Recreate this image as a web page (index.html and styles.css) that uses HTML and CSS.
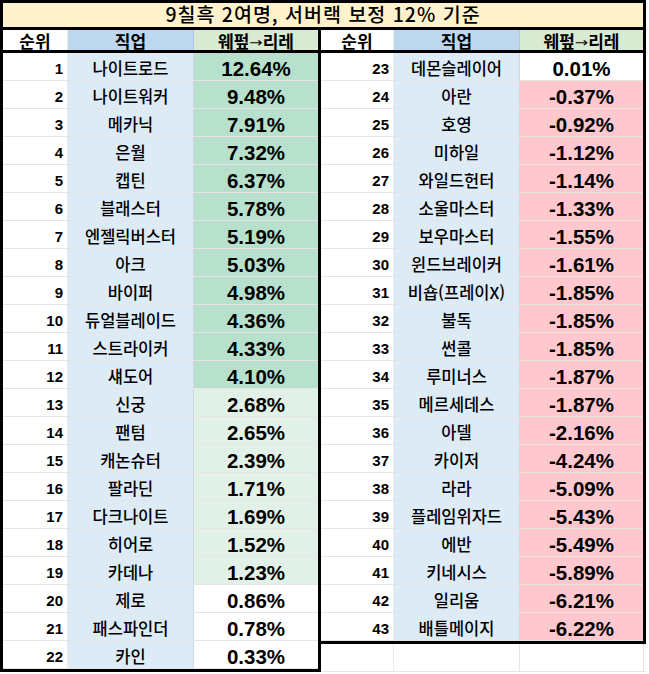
FILE: index.html
```html
<!DOCTYPE html>
<html lang="ko">
<head>
<meta charset="utf-8">
<title>9칠흑 2여명, 서버랙 보정 12% 기준</title>
<link rel="stylesheet" href="styles.css">
</head>
<body>
<div class="sheet">
  <div class="title">9칠흑 2여명, 서버랙 보정 12% 기준</div>
  <div class="head">
    <div class="half left">
      <div class="hc rank-l">순위</div>
      <div class="hc job hb">직업</div>
      <div class="hc val-l hg">웨펖<span class="arrow">→</span>리레</div>
    </div>
    <div class="half right">
      <div class="hc rank-r">순위</div>
      <div class="hc job hb">직업</div>
      <div class="hc val-r hg">웨펖<span class="arrow">→</span>리레</div>
    </div>
  </div>
  <div class="body">
    <div class="block left">
      <div class="row"><div class="c rank rank-l">1</div><div class="c job">나이트로드</div><div class="c val val-l g">12.64%</div></div>
      <div class="row"><div class="c rank rank-l">2</div><div class="c job">나이트워커</div><div class="c val val-l g">9.48%</div></div>
      <div class="row"><div class="c rank rank-l">3</div><div class="c job">메카닉</div><div class="c val val-l g">7.91%</div></div>
      <div class="row"><div class="c rank rank-l">4</div><div class="c job">은월</div><div class="c val val-l g">7.32%</div></div>
      <div class="row"><div class="c rank rank-l">5</div><div class="c job">캡틴</div><div class="c val val-l g">6.37%</div></div>
      <div class="row"><div class="c rank rank-l">6</div><div class="c job">블래스터</div><div class="c val val-l g">5.78%</div></div>
      <div class="row"><div class="c rank rank-l">7</div><div class="c job">엔젤릭버스터</div><div class="c val val-l g">5.19%</div></div>
      <div class="row"><div class="c rank rank-l">8</div><div class="c job">아크</div><div class="c val val-l g">5.03%</div></div>
      <div class="row"><div class="c rank rank-l">9</div><div class="c job">바이퍼</div><div class="c val val-l g">4.98%</div></div>
      <div class="row"><div class="c rank rank-l">10</div><div class="c job">듀얼블레이드</div><div class="c val val-l g">4.36%</div></div>
      <div class="row"><div class="c rank rank-l">11</div><div class="c job">스트라이커</div><div class="c val val-l g">4.33%</div></div>
      <div class="row"><div class="c rank rank-l">12</div><div class="c job">섀도어</div><div class="c val val-l g">4.10%</div></div>
      <div class="row"><div class="c rank rank-l">13</div><div class="c job">신궁</div><div class="c val val-l lg">2.68%</div></div>
      <div class="row"><div class="c rank rank-l">14</div><div class="c job">팬텀</div><div class="c val val-l lg">2.65%</div></div>
      <div class="row"><div class="c rank rank-l">15</div><div class="c job">캐논슈터</div><div class="c val val-l lg">2.39%</div></div>
      <div class="row"><div class="c rank rank-l">16</div><div class="c job">팔라딘</div><div class="c val val-l lg">1.71%</div></div>
      <div class="row"><div class="c rank rank-l">17</div><div class="c job">다크나이트</div><div class="c val val-l lg">1.69%</div></div>
      <div class="row"><div class="c rank rank-l">18</div><div class="c job">히어로</div><div class="c val val-l lg">1.52%</div></div>
      <div class="row"><div class="c rank rank-l">19</div><div class="c job">카데나</div><div class="c val val-l lg">1.23%</div></div>
      <div class="row"><div class="c rank rank-l">20</div><div class="c job">제로</div><div class="c val val-l">0.86%</div></div>
      <div class="row"><div class="c rank rank-l">21</div><div class="c job">패스파인더</div><div class="c val val-l">0.78%</div></div>
      <div class="row"><div class="c rank rank-l">22</div><div class="c job">카인</div><div class="c val val-l">0.33%</div></div>
    </div>
    <div class="rcol">
      <div class="block right">
        <div class="row"><div class="c rank rank-r">23</div><div class="c job">데몬슬레이어</div><div class="c val val-r">0.01%</div></div>
        <div class="row"><div class="c rank rank-r">24</div><div class="c job">아란</div><div class="c val val-r p">-0.37%</div></div>
        <div class="row"><div class="c rank rank-r">25</div><div class="c job">호영</div><div class="c val val-r p">-0.92%</div></div>
        <div class="row"><div class="c rank rank-r">26</div><div class="c job">미하일</div><div class="c val val-r p">-1.12%</div></div>
        <div class="row"><div class="c rank rank-r">27</div><div class="c job">와일드헌터</div><div class="c val val-r p">-1.14%</div></div>
        <div class="row"><div class="c rank rank-r">28</div><div class="c job">소울마스터</div><div class="c val val-r p">-1.33%</div></div>
        <div class="row"><div class="c rank rank-r">29</div><div class="c job">보우마스터</div><div class="c val val-r p">-1.55%</div></div>
        <div class="row"><div class="c rank rank-r">30</div><div class="c job">윈드브레이커</div><div class="c val val-r p">-1.61%</div></div>
        <div class="row"><div class="c rank rank-r">31</div><div class="c job">비숍(프레이X)</div><div class="c val val-r p">-1.85%</div></div>
        <div class="row"><div class="c rank rank-r">32</div><div class="c job">불독</div><div class="c val val-r p">-1.85%</div></div>
        <div class="row"><div class="c rank rank-r">33</div><div class="c job">썬콜</div><div class="c val val-r p">-1.85%</div></div>
        <div class="row"><div class="c rank rank-r">34</div><div class="c job">루미너스</div><div class="c val val-r p">-1.87%</div></div>
        <div class="row"><div class="c rank rank-r">35</div><div class="c job">메르세데스</div><div class="c val val-r p">-1.87%</div></div>
        <div class="row"><div class="c rank rank-r">36</div><div class="c job">아델</div><div class="c val val-r p">-2.16%</div></div>
        <div class="row"><div class="c rank rank-r">37</div><div class="c job">카이저</div><div class="c val val-r p">-4.24%</div></div>
        <div class="row"><div class="c rank rank-r">38</div><div class="c job">라라</div><div class="c val val-r p">-5.09%</div></div>
        <div class="row"><div class="c rank rank-r">39</div><div class="c job">플레임위자드</div><div class="c val val-r p">-5.43%</div></div>
        <div class="row"><div class="c rank rank-r">40</div><div class="c job">에반</div><div class="c val val-r p">-5.49%</div></div>
        <div class="row"><div class="c rank rank-r">41</div><div class="c job">키네시스</div><div class="c val val-r p">-5.89%</div></div>
        <div class="row"><div class="c rank rank-r">42</div><div class="c job">일리움</div><div class="c val val-r p">-6.21%</div></div>
        <div class="row"><div class="c rank rank-r">43</div><div class="c job">배틀메이지</div><div class="c val val-r p">-6.22%</div></div>
      </div>
      <div class="row empty"><div class="c rank rank-r"></div><div class="c blank"></div><div class="c blank last"></div></div>
    </div>
  </div>
</div>
</body>
</html>
```

FILE: styles.css
```css
html, body {
  margin: 0;
  padding: 0;
  background: #ffffff;
}

.sheet {
  width: 649px;
  height: 674px;
  overflow: hidden;
  color: #000;
  font-family: "Noto Sans CJK KR", "Noto Sans", sans-serif;
}

.title {
  box-sizing: border-box;
  width: 646px;
  height: 30px;
  padding-bottom: 2px;
  border: 3px solid #000;
  background: #fff2cc;
  display: flex;
  align-items: center;
  justify-content: center;
  font-size: 19.5px;
  line-height: 22px;
  font-weight: 500;
  letter-spacing: 1px;
}

.head {
  box-sizing: border-box;
  width: 646px;
  height: 23px;
  display: flex;
  border-left: 3px solid #000;
  border-right: 3px solid #000;
  border-bottom: 3px solid #000;
}

.half {
  display: flex;
  height: 100%;
}

.half.left {
  border-right: 3px solid #000;
}

.hc {
  box-sizing: border-box;
  height: 100%;
  padding-top: 2px;
  display: flex;
  align-items: center;
  justify-content: center;
  font-size: 17px;
  font-weight: 700;
  line-height: 18px;
  background: #fff;
  border-right: 1px solid rgba(0, 0, 0, 0.08);
}

.hc.hb { background: #bdd7ee; }
.hc.hg { background: #d9ead3; border-right: 0; }

.arrow {
  font-family: "DejaVu Sans", sans-serif;
  font-weight: 400;
  font-size: 16px;
  margin: 4px 0 0;
  transform: scaleY(0.8);
}

.rank-l { width: 65px; }
.rank-r { width: 73px; }
.job { width: 126px; }
.val-l { width: 124px; }
.val-r { width: 123px; }

.body {
  display: flex;
  align-items: flex-start;
}

.block {
  box-sizing: border-box;
  border-bottom: 3px solid #000;
  border-right: 3px solid #000;
}

.block.left {
  width: 321px;
  border-left: 3px solid #000;
}

.rcol {
  width: 325px;
}

.block.right {
  width: 325px;
}

.row {
  box-sizing: border-box;
  height: 28px;
  display: flex;
  border-bottom: 1px solid rgba(0, 0, 0, 0.1);
}

.c {
  box-sizing: border-box;
  height: 100%;
  display: flex;
  align-items: center;
  padding-top: 4px;
  white-space: nowrap;
}

.rank {
  justify-content: flex-end;
  padding-right: 4px;
  font-family: "Liberation Sans", Arial, sans-serif;
  font-weight: 700;
  font-size: 15px;
  line-height: 18px;
  border-right: 1px solid rgba(0, 0, 0, 0.08);
}

.c.job {
  justify-content: center;
  background: #ddebf7;
  font-size: 16.5px;
  font-weight: 500;
  line-height: 20px;
  padding-top: 2px;
  border-right: 1px solid rgba(0, 0, 0, 0.08);
}

.val {
  justify-content: center;
  font-family: "Liberation Sans", Arial, sans-serif;
  font-weight: 700;
  font-size: 20.5px;
  line-height: 22px;
}

.val.g { background: #b7e1cd; }
.val.lg { background: #e2f1e7; }
.val.p { background: #ffc7ce; }

.blank {
  width: 126px;
  border-right: 1px solid rgba(0, 0, 0, 0.1);
}

.blank.last {
  width: 124px;
}
```
